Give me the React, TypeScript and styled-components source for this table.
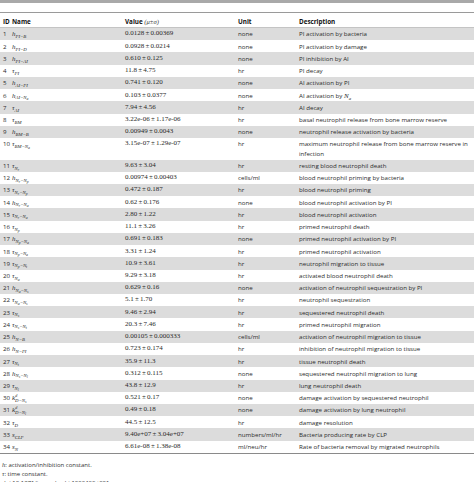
import React from "react";
import styled, { createGlobalStyle } from "styled-components";

const GlobalStyle = createGlobalStyle`
  html, body { margin: 0; padding: 0; background: #ffffff; }
  body { font-family: "Open Sans", "Liberation Sans", sans-serif; color: #2a2a2a; }
`;

const Page = styled.div`
  width: 474px;
  overflow: hidden;
`;

const TopRule = styled.div`
  height: 3px;
  background: #a9a9a9;
  margin-bottom: 9px;
`;

const Table = styled.div`
  border-top: 1px solid #9a9a9a;
  border-bottom: 1px solid #8a8a8a;
`;

const cols = "9px 113px 113px 61px 1fr";

const HeaderRow = styled.div`
  display: grid;
  grid-template-columns: ${cols};
  align-items: center;
  height: 11.5px;
  padding: 2.5px 2px 0 3px;
  font-size: 6.3px;
  font-weight: 700;
  color: #111;
  border-bottom: 1px solid #c4c4c4;
  line-height: 11.5px;
`;

const Row = styled.div<{ $shade: boolean }>`
  display: grid;
  grid-template-columns: ${cols};
  align-items: start;
  padding: 1.42px 2px 1.42px 3px;
  line-height: 9.4px;
  font-size: 6.15px;
  background: ${(p) => (p.$shade ? "#dcdcdc" : "#ffffff")};
`;

const IdCell = styled.div`
  white-space: nowrap;
`;

const NameCell = styled.div`
  white-space: nowrap;
`;

const ValueCell = styled.div`
  font-family: "Liberation Serif", "Times New Roman", serif;
  font-size: 7px;
  white-space: nowrap;
`;

const HeadValue = styled.div`
  white-space: nowrap;
`;

const Pm = styled.span`
  margin: 0 1.2px;
`;

const UnitCell = styled.div`
  white-space: nowrap;
`;

const DescCell = styled.div``;

const HeadMath = styled.span`
  font-family: "Liberation Serif", "Times New Roman", serif;
  font-style: italic;
  font-weight: 400;
  font-size: 6.6px;
  color: #444;
  line-height: 0;
`;

const M = styled.span`
  font-family: "Liberation Serif", "Times New Roman", serif;
  font-style: italic;
  font-size: 7px;
  line-height: 0;
`;

const Sub = styled.span`
  font-size: 4.8px;
  line-height: 0;
  vertical-align: -1.6px;
  font-style: italic;
`;

const SubSub = styled.span`
  font-size: 3.8px;
  line-height: 0;
  vertical-align: -1px;
`;

const Sup = styled.span`
  font-size: 4.6px;
  line-height: 0;
`;

const KdWrap = styled.span`
  display: inline-block;
  position: relative;
  line-height: 0;
  & > span:first-child {
    position: absolute;
    left: 0;
    top: -2.6px;
  }
`;

const Footnotes = styled.div`
  padding: 7.5px 0 0 2px;
  font-size: 6px;
  line-height: 8.8px;
  color: #333;
`;

const FootMath = styled.span`
  font-family: "Liberation Serif", "Times New Roman", serif;
  font-style: italic;
  font-size: 6.6px;
  line-height: 0;
`;

const N = ({ s }: { s: string }) => (
  <>
    N<SubSub>{s}</SubSub>
  </>
);

const sym = (base: string, sub: React.ReactNode) => (
  <M>
    {base}
    <Sub>{sub}</Sub>
  </M>
);

const kd = (sub: React.ReactNode) => (
  <M>
    k
    <KdWrap>
      <Sup>d</Sup>
      <Sub>{sub}</Sub>
    </KdWrap>
  </M>
);

type RowData = {
  name: React.ReactNode;
  v: [string, string];
  unit: string;
  desc: React.ReactNode;
};

const D = "\u2212";

const rows: RowData[] = [
  { name: sym("h", `PI${D}B`), v: ["0.0128", "0.00369"], unit: "none", desc: "PI activation by bacteria" },
  { name: sym("h", `PI${D}D`), v: ["0.0928", "0.0214"], unit: "none", desc: "PI activation by damage" },
  { name: sym("h", `PI${D}AI`), v: ["0.610", "0.125"], unit: "none", desc: "PI inhibition by AI" },
  { name: sym("τ", "PI"), v: ["11.8", "4.75"], unit: "hr", desc: "PI decay" },
  { name: sym("h", `AI${D}PI`), v: ["0.741", "0.120"], unit: "none", desc: "AI activation by PI" },
  { name: sym("h", <>AI{D}<N s="a" /></>), v: ["0.103", "0.0377"], unit: "none", desc: <>AI activation by <M>N<Sub>a</Sub></M></> },
  { name: sym("τ", "AI"), v: ["7.94", "4.56"], unit: "hr", desc: "AI decay" },
  { name: sym("τ", "BM"), v: ["3.22e-06", "1.17e-06"], unit: "hr", desc: "basal neutrophil release from bone marrow reserve" },
  { name: sym("h", `BM${D}B`), v: ["0.00949", "0.0043"], unit: "none", desc: "neutrophil release activation by bacteria" },
  { name: sym("τ", <>BM{D}<N s="a" /></>), v: ["3.15e-07", "1.29e-07"], unit: "hr", desc: <>maximum neutrophil release from bone marrow reserve in<br />infection</> },
  { name: sym("τ", <N s="r" />), v: ["9.63", "3.04"], unit: "hr", desc: "resting blood neutrophil death" },
  { name: sym("h", <><N s="r" />{D}<N s="p" /></>), v: ["0.00974", "0.00403"], unit: "cells/ml", desc: "blood neutrophil priming by bacteria" },
  { name: sym("τ", <><N s="r" />{D}<N s="p" /></>), v: ["0.472", "0.187"], unit: "hr", desc: "blood neutrophil priming" },
  { name: sym("h", <><N s="r" />{D}<N s="a" /></>), v: ["0.62", "0.176"], unit: "none", desc: "blood neutrophil activation by PI" },
  { name: sym("τ", <><N s="r" />{D}<N s="a" /></>), v: ["2.80", "1.22"], unit: "hr", desc: "blood neutrophil activation" },
  { name: sym("τ", <N s="p" />), v: ["11.1", "3.26"], unit: "hr", desc: "primed neutrophil death" },
  { name: sym("h", <><N s="p" />{D}<N s="a" /></>), v: ["0.691", "0.183"], unit: "none", desc: "primed neutrophil activation by PI" },
  { name: sym("τ", <><N s="p" />{D}<N s="a" /></>), v: ["3.31", "1.24"], unit: "hr", desc: "primed neutrophil activation" },
  { name: sym("τ", <><N s="p" />{D}<N s="t" /></>), v: ["10.9", "3.61"], unit: "hr", desc: "neutrophil migration to tissue" },
  { name: sym("τ", <N s="a" />), v: ["9.29", "3.18"], unit: "hr", desc: "activated blood neutrophil death" },
  { name: sym("h", <><N s="a" />{D}<N s="s" /></>), v: ["0.629", "0.16"], unit: "none", desc: "activation of neutrophil sequestration by PI" },
  { name: sym("τ", <><N s="a" />{D}<N s="s" /></>), v: ["5.1", "1.70"], unit: "hr", desc: "neutrophil sequestration" },
  { name: sym("τ", <N s="s" />), v: ["9.46", "2.94"], unit: "hr", desc: "sequestered neutrophil death" },
  { name: sym("τ", <><N s="s" />{D}<N s="t" /></>), v: ["20.3", "7.46"], unit: "hr", desc: "primed neutrophil migration" },
  { name: sym("h", `N${D}B`), v: ["0.00105", "0.000333"], unit: "cells/ml", desc: "activation of neutrophil migration to tissue" },
  { name: sym("h", `N${D}PI`), v: ["0.723", "0.174"], unit: "hr", desc: "inhibition of neutrophil migration to tissue" },
  { name: sym("τ", <N s="t" />), v: ["35.9", "11.3"], unit: "hr", desc: "tissue neutrophil death" },
  { name: sym("h", <><N s="s" />{D}<N s="l" /></>), v: ["0.312", "0.115"], unit: "none", desc: "sequestered neutrophil migration to lung" },
  { name: sym("τ", <N s="l" />), v: ["43.8", "12.9"], unit: "hr", desc: "lung neutrophil death" },
  { name: kd(<>D{D}<N s="s" /></>), v: ["0.521", "0.17"], unit: "none", desc: "damage activation by sequestered neutrophil" },
  { name: kd(<>D{D}<N s="l" /></>), v: ["0.49", "0.18"], unit: "none", desc: "damage activation by lung neutrophil" },
  { name: sym("τ", "D"), v: ["44.5", "12.5"], unit: "hr", desc: "damage resolution" },
  { name: sym("s", "CLP"), v: ["9.40e+07", "3.04e+07"], unit: "numbers/ml/hr", desc: "Bacteria producing rate by CLP" },
  { name: sym("s", "N"), v: ["6.61e-08", "1.38e-08"], unit: "ml/neu/hr", desc: "Rate of bacteria removal by migrated neutrophils" },
];

export default function App() {
  return (
    <Page>
      <GlobalStyle />
      <TopRule />
      <Table>
        <HeaderRow>
          <IdCell>ID</IdCell>
          <NameCell>Name</NameCell>
          <HeadValue>
            Value <HeadMath>(μ±σ)</HeadMath>
          </HeadValue>
          <UnitCell>Unit</UnitCell>
          <DescCell>Description</DescCell>
        </HeaderRow>
        {rows.map((r, i) => (
          <Row key={i} $shade={i % 2 === 0}>
            <IdCell>{i + 1}</IdCell>
            <NameCell>{r.name}</NameCell>
            <ValueCell>
              {r.v[0]}
              <Pm>±</Pm>
              {r.v[1]}
            </ValueCell>
            <UnitCell>{r.unit}</UnitCell>
            <DescCell>{r.desc}</DescCell>
          </Row>
        ))}
      </Table>
      <Footnotes>
        <div>
          <FootMath>h</FootMath>: activation/inhibition constant.
        </div>
        <div>
          <FootMath>τ</FootMath>: time constant.
        </div>
        <div>doi:10.1371/journal.pcbi.1002422.t001</div>
      </Footnotes>
    </Page>
  );
}
